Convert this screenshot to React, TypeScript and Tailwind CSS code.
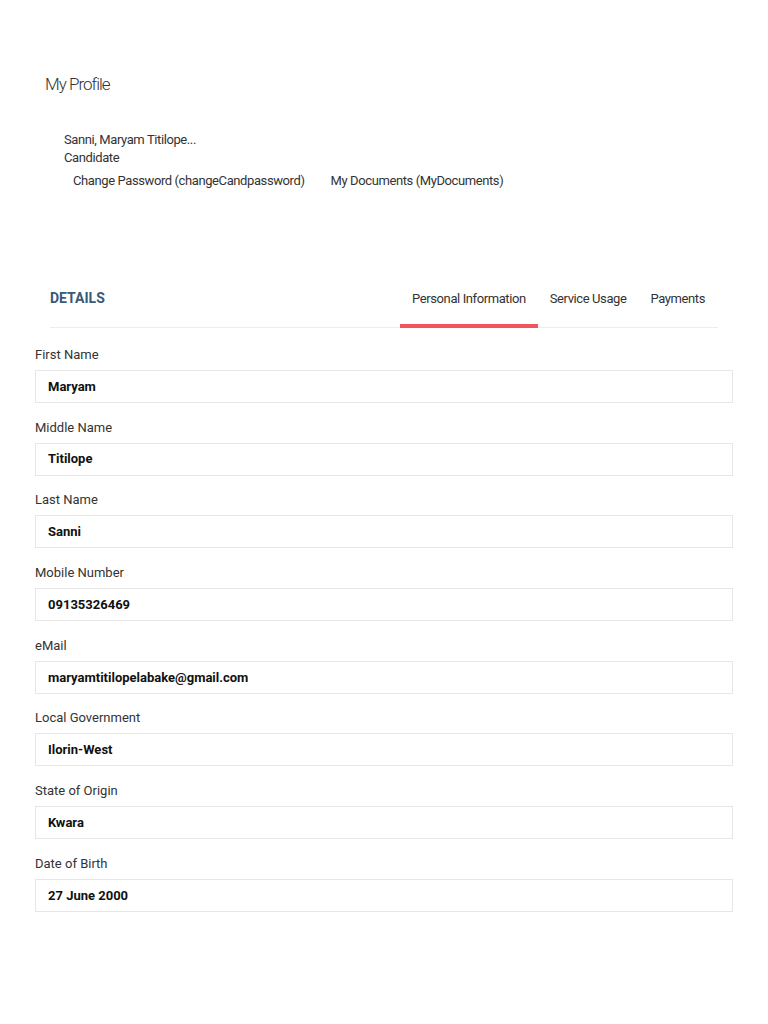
const fields = [
  { label: 'First Name', value: 'Maryam' },
  { label: 'Middle Name', value: 'Titilope' },
  { label: 'Last Name', value: 'Sanni' },
  { label: 'Mobile Number', value: '09135326469' },
  { label: 'eMail', value: 'maryamtitilopelabake@gmail.com' },
  { label: 'Local Government', value: 'Ilorin-West' },
  { label: 'State of Origin', value: 'Kwara' },
  { label: 'Date of Birth', value: '27 June 2000' },
]

const tabs = ['Personal Information', 'Service Usage', 'Payments']

export default function App() {
  return (
    <div className="min-h-[1024px] bg-white text-[#333] font-['Roboto',sans-serif] pb-[100px]">
      <div className="pt-[72px] pl-[45px]">
        <h1 className="text-[17px] font-light leading-[24px] tracking-[-1px] text-[#333]">My Profile</h1>
      </div>

      <div className="pl-[64px] mt-[35px] text-[13px] leading-[18px] tracking-[-0.4px]">
        <div>Sanni, Maryam Titilope...</div>
        <div>Candidate</div>
        <div className="flex gap-[26px] pl-[9px] mt-[5px]">
          <span>Change Password (changeCandpassword)</span>
          <span>My Documents (MyDocuments)</span>
        </div>
      </div>

      <div className="mx-[50px] mt-[99px] flex items-end justify-between border-b border-[#ececec]">
        <div className="pb-[20px] text-[14px] font-bold leading-[18px] text-[#3a5878]">DETAILS</div>
        <div className="flex -mb-px mr-px">
          {tabs.map((t, i) => (
            <div
              key={t}
              className={
                i === 0
                  ? 'px-[12px] pb-[16px] text-[13px] leading-[18px] tracking-[-0.4px] border-b-4 border-[#f2545b]'
                  : 'px-[12px] pb-[16px] text-[13px] leading-[18px] tracking-[-0.4px] border-b-4 border-transparent'
              }
            >
              {t}
            </div>
          ))}
        </div>
      </div>

      <div className="mx-[35px] mt-[18px] flex flex-col">
        {fields.map(f => (
          <div key={f.label} className="mb-[15.7px]">
            <div className="text-[13px] leading-[17px] text-[#333]">{f.label}</div>
            <div className="mt-[7px] h-[33px] border border-[#e6e6e6] px-[12px] flex items-center text-[13px] font-bold text-[#111]">
              {f.value}
            </div>
          </div>
        ))}
      </div>
    </div>
  )
}
